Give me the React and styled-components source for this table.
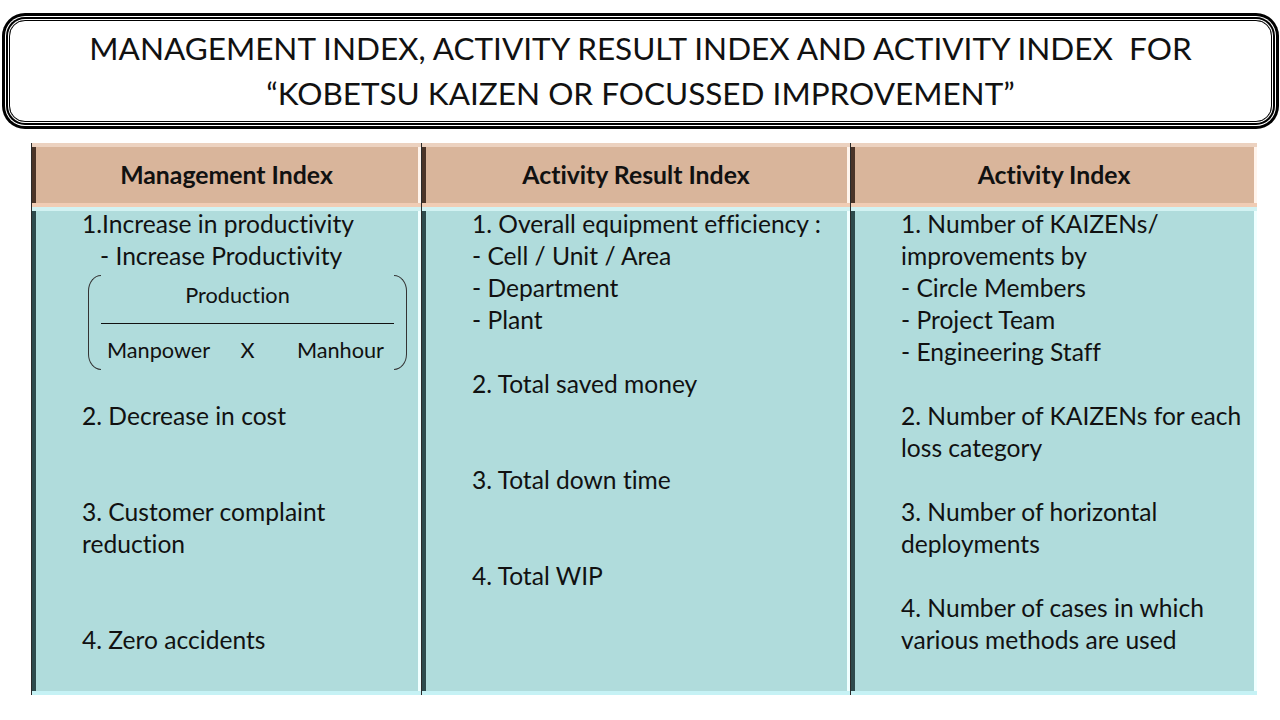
import React from 'react';
import styled, { createGlobalStyle } from 'styled-components';

const Global = createGlobalStyle`
  body {
    margin: 0;
    background: #ffffff;
    font-family: 'Lato', 'Liberation Sans', sans-serif;
    font-variant-ligatures: none;
    color: #111111;
  }
`

const Page = styled.div`
  width: 1280px;
  height: 720px;
  padding-top: 20px;
  box-sizing: border-box;
`

const TitleBox = styled.div`
  margin: 0 8px 0 9px;
  height: 102px;
  box-sizing: border-box;
  padding: 5px 0;
  border: 1px solid #000;
  border-radius: 16px;
  box-shadow: 0 0 0 1px #fff, 0 0 0 3px #000, 0 0 0 4px #fff, 0 0 0 7px #000;
  text-align: center;
`

const Title = styled.h1`
  margin: 0;
  font-family: 'Lato', sans-serif;
  font-weight: 400;
  font-size: 31.5px;
  line-height: 45px;
  white-space: pre;
`

const Table = styled.div`
  display: grid;
  grid-template-columns: 390px 429px 407px;
  grid-template-rows: 64px 488px;
  margin: 21px 0 0 31px;
  width: 1226px;
`

const Cell = styled.div`
  box-sizing: border-box;
  border-left: 1px solid #2a2a2a;
  background: ${p => p.$head ? '#d9b59b' : '#b0dcdc'};
  box-shadow: ${p => p.$head
    ? 'inset 0 4px 0 #ecd2c0, inset 0 -4px 0 #f0ccb4, inset -3px 0 0 #fff4ec, inset 4px 0 0 #4a3428'
    : 'inset 0 4px 0 #d2f2f2, inset 0 -4px 0 #c6f2f5, inset -3px 0 0 #f0ffff, inset 4px 0 0 #2e4a4c'};
`

const HeadCell = styled(Cell)`
  display: flex;
  align-items: center;
  justify-content: center;
  padding-bottom: 2px;
  font-weight: 700;
  font-size: 24.8px;
`

const BodyCell = styled(Cell)`
  padding: 1px 0 0 50px;
  font-size: 24.6px;
  line-height: 32px;
`

const Line = styled.div`
  height: 32px;
  white-space: pre;
  padding-left: ${p => p.$indent || 0}px;
`

const Formula = styled.div`
  display: flex;
  height: 95px;
  margin: 3px 0 -2px 6px;
  width: 319px;
  font-size: 21.7px;
`

const Bracket = styled.div`
  width: 13px;
  box-sizing: border-box;
  border: 1px solid #333;
  border-${p => p.$side}: none;
  border-radius: ${p => p.$side === 'right' ? '13px 0 0 13px / 16px 0 0 16px' : '0 13px 13px 0 / 0 16px 16px 0'};
`

const Fraction = styled.div`
  flex: 1;
  display: flex;
  flex-direction: column;
`

const Numerator = styled.div`
  height: 40px;
  line-height: 40px;
  text-align: center;
  padding-right: 20px;
`

const Bar = styled.div`
  margin-top: 8px;
  height: 1px;
  background: #111;
`

const Denominator = styled.div`
  display: flex;
  justify-content: space-between;
  padding: 6px 10px 0 6px;
  line-height: 40px;
`

const Times = styled.span`
  margin-right: 12px;
`

const management = [
  '1.Increase in productivity',
  { text: '- Increase Productivity', indent: 18 },
  'formula',
  '',
  '2. Decrease in cost',
  '',
  '',
  '3. Customer complaint',
  'reduction',
  '',
  '',
  '4. Zero accidents',
];

const result = [
  '1. Overall equipment efficiency :',
  '- Cell / Unit / Area',
  '- Department',
  '- Plant',
  '',
  '2. Total saved money',
  '',
  '',
  '3. Total down time',
  '',
  '',
  '4. Total WIP',
];

const activity = [
  '1. Number of KAIZENs/',
  'improvements by',
  '- Circle Members',
  '- Project Team',
  '- Engineering Staff',
  '',
  '2. Number of KAIZENs for each',
  'loss category',
  '',
  '3. Number of horizontal',
  'deployments',
  '',
  '4. Number of cases in which',
  'various methods are used',
];

const ProductivityFormula = () => (
  <Formula>
    <Bracket $side="right" />
    <Fraction>
      <Numerator>Production</Numerator>
      <Bar />
      <Denominator>
        <span>Manpower</span>
        <Times>X</Times>
        <span>Manhour</span>
      </Denominator>
    </Fraction>
    <Bracket $side="left" />
  </Formula>
);

const Lines = ({ items }) => items.map((item, i) => {
  if (item === 'formula') return <ProductivityFormula key={i} />;
  if (typeof item === 'object') return <Line key={i} $indent={item.indent}>{item.text}</Line>;
  return <Line key={i}>{item}</Line>;
});

const App = () => {
  return (
    <>
      <Global />
      <Page>
        <TitleBox>
          <Title>
            MANAGEMENT INDEX, ACTIVITY RESULT INDEX AND ACTIVITY INDEX  FOR
            <br />
            “KOBETSU KAIZEN OR FOCUSSED IMPROVEMENT”
          </Title>
        </TitleBox>
        <Table>
          <HeadCell $head>Management Index</HeadCell>
          <HeadCell $head>Activity Result Index</HeadCell>
          <HeadCell $head>Activity Index</HeadCell>
          <BodyCell><Lines items={management} /></BodyCell>
          <BodyCell><Lines items={result} /></BodyCell>
          <BodyCell><Lines items={activity} /></BodyCell>
        </Table>
      </Page>
    </>
  );
};

export default App;
